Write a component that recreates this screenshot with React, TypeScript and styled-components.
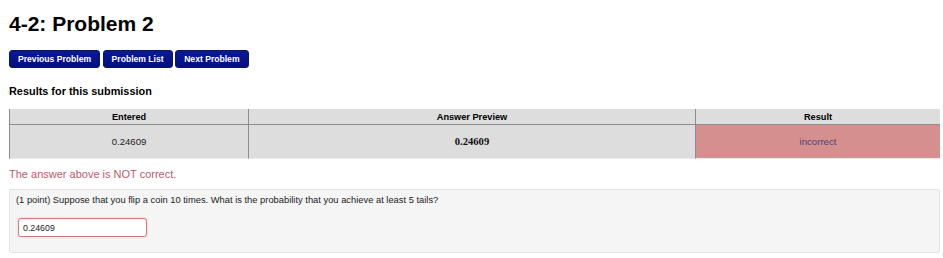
import { createGlobalStyle } from 'styled-components';
import styled from 'styled-components';

const GlobalStyle = createGlobalStyle`
  html, body {
    margin: 0;
    padding: 0;
    background: #fff;
  }
  body {
    font-family: "Liberation Sans", Arial, Helvetica, sans-serif;
    color: #000;
  }
`;

const Page = styled.div`
  display: flex;
  flex-direction: column;
  padding: 11px 3px 0 9px;
`;

const Title = styled.h1`
  margin: 0;
  font-size: 21px;
  line-height: 26px;
  font-weight: bold;
  color: #000;
`;

const NavBar = styled.div`
  display: flex;
  gap: 2.5px;
  margin-top: 13px;
`;

const NavButton = styled.button`
  height: 18px;
  padding: 0 8px;
  border: 1px solid #0b1660;
  border-radius: 3px;
  background: linear-gradient(#0a1a94, #030f80);
  color: #fff;
  font-family: "Liberation Sans", Arial, sans-serif;
  font-size: 8.6px;
  font-weight: bold;
  line-height: 16px;
  cursor: pointer;
`;

const SectionLabel = styled.h3`
  margin: 16px 0 0;
  font-size: 10.9px;
  line-height: 14px;
  font-weight: bold;
`;

const ResultsTable = styled.table`
  margin-top: 11px;
  width: 931px;
  border-collapse: separate;
  border-spacing: 0;
  table-layout: fixed;
  background: #dddddd;
`;

const HeadCell = styled.th<{ $w: number }>`
  width: ${(p) => p.$w}px;
  height: 15px;
  padding: 0;
  border-left: 1px solid #8c8c8c;
  border-bottom: 1px solid #8c8c8c;
  font-size: 9.2px;
  font-weight: bold;
  text-align: center;
  vertical-align: middle;
  color: #000;
`;

const BodyCell = styled.td<{ $tone?: 'bad' }>`
  height: 33px;
  padding: 0;
  border-left: 1px solid #8c8c8c;
  border-bottom: 1px solid #ececec;
  text-align: center;
  vertical-align: middle;
  font-size: 9.6px;
  color: ${(p) => (p.$tone === 'bad' ? '#4d3f72' : '#222')};
  background: ${(p) => (p.$tone === 'bad' ? '#d68f8f' : '#dddddd')};
`;

const MathPreview = styled.span`
  font-family: "Liberation Serif", "Times New Roman", serif;
  font-size: 10.6px;
  font-weight: bold;
  color: #111;
`;

const Verdict = styled.div`
  margin-top: 8px;
  font-size: 11px;
  line-height: 14px;
  color: #b85c6e;
`;

const ProblemBox = styled.div`
  margin-top: 8px;
  padding: 4px 6px 15px;
  background: #f5f5f5;
  border: 1px solid #e3e3e3;
  border-radius: 2px;
  display: flex;
  flex-direction: column;
  align-items: flex-start;
`;

const ProblemText = styled.p`
  margin: 0;
  font-size: 9.35px;
  line-height: 13px;
  color: #222;
`;

const AnswerInput = styled.input`
  box-sizing: border-box;
  margin: 11px 0 0 2px;
  width: 129px;
  height: 19px;
  padding: 0 4px;
  border: 1px solid #d67a7c;
  border-radius: 3px;
  background: #fff;
  box-shadow: inset 0 1px 1px rgba(0, 0, 0, 0.075), 0 0 2px rgba(217, 83, 79, 0.35);
  font-family: "Liberation Sans", Arial, sans-serif;
  font-size: 8.8px;
  color: #222;
  outline: none;
`;

const columns = [
  { label: 'Entered', width: 238 },
  { label: 'Answer Preview', width: 446 },
  { label: 'Result', width: 244 },
];

export default function App() {
  return (
    <>
      <GlobalStyle />
      <Page>
        <Title>4-2: Problem 2</Title>
        <NavBar>
          <NavButton>Previous Problem</NavButton>
          <NavButton>Problem List</NavButton>
          <NavButton>Next Problem</NavButton>
        </NavBar>
        <SectionLabel>Results for this submission</SectionLabel>
        <ResultsTable>
          <thead>
            <tr>
              {columns.map((c) => (
                <HeadCell key={c.label} $w={c.width}>
                  {c.label}
                </HeadCell>
              ))}
            </tr>
          </thead>
          <tbody>
            <tr>
              <BodyCell>0.24609</BodyCell>
              <BodyCell>
                <MathPreview>0.24609</MathPreview>
              </BodyCell>
              <BodyCell $tone="bad">incorrect</BodyCell>
            </tr>
          </tbody>
        </ResultsTable>
        <Verdict>The answer above is NOT correct.</Verdict>
        <ProblemBox>
          <ProblemText>
            (1 point) Suppose that you flip a coin 10 times. What is the probability that you
            achieve at least 5 tails?
          </ProblemText>
          <AnswerInput defaultValue="0.24609" />
        </ProblemBox>
      </Page>
    </>
  );
}
